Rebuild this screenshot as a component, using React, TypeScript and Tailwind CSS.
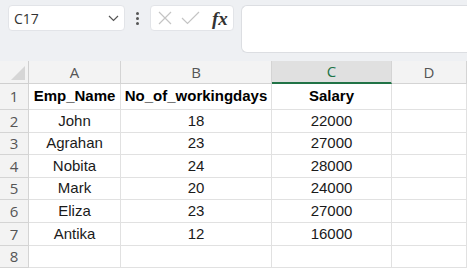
import React from 'react';

const rows = [
  ['Emp_Name', 'No_of_workingdays', 'Salary'],
  ['John', '18', '22000'],
  ['Agrahan', '23', '27000'],
  ['Nobita', '24', '28000'],
  ['Mark', '20', '24000'],
  ['Eliza', '23', '27000'],
  ['Antika', '12', '16000'],
  ['', '', ''],
];

const cols = ['A', 'B', 'C', 'D'];

export default function App() {
  return (
    <div className="w-[467px] h-[270px] overflow-hidden bg-white" style={{ fontFamily: '"Liberation Sans", Arial, sans-serif' }}>
      {/* Formula bar area */}
      <div className="h-[61px] bg-[#eef0f3] flex items-start pt-[5px] pl-[8px]">
        <div className="w-[117px] h-[26px] bg-white rounded-[4px] border border-[#e2e4e8] flex items-center justify-between pl-[5px] pr-[5px]">
          <span className="text-[14px] text-[#333]" style={{ fontFamily: '"Open Sans", sans-serif' }}>C17</span>
          <svg width="11" height="7" viewBox="0 0 11 7" fill="none">
            <path d="M1 1l4.5 4.5L10 1" stroke="#555" strokeWidth="1.2" />
          </svg>
        </div>
        <div className="w-[25px] h-[26px] flex flex-col items-center justify-center gap-[2px]">
          <span className="w-[3px] h-[3px] bg-[#555] rounded-full"></span>
          <span className="w-[3px] h-[3px] bg-[#555] rounded-full"></span>
          <span className="w-[3px] h-[3px] bg-[#555] rounded-full"></span>
        </div>
        <div className="w-[84px] h-[26px] bg-white rounded-[4px] border border-[#e2e4e8] flex items-center pl-[6px] gap-[8px]">
          <svg width="16" height="16" viewBox="0 0 16 16" fill="none">
            <path d="M2 2l12 12M14 2L2 14" stroke="#c4c4c4" strokeWidth="1.2" />
          </svg>
          <svg width="19" height="16" viewBox="0 0 19 16" fill="none">
            <path d="M1 8l5.5 5.5L18 2" stroke="#c4c4c4" strokeWidth="1.2" />
          </svg>
          <span className="text-[19px] italic font-semibold text-[#333] leading-none ml-[4px]" style={{ fontFamily: '"Liberation Serif", serif' }}>
            fx
          </span>
        </div>
        <div className="ml-[7px] flex-1 h-[48px] bg-white rounded-l-[6px] border border-r-0 border-[#dcdee2]"></div>
      </div>

      {/* Grid */}
      <div className="grid grid-cols-[29px_92px_151px_120px_1fr]">
        {/* header row */}
        <div className="h-[23px] bg-[#f3f3f3] border-r border-b border-[#cfcfcf] relative">
          <svg className="absolute right-[3px] bottom-[3px]" width="14" height="14" viewBox="0 0 14 14">
            <path d="M14 0L14 14L0 14Z" fill="#d6d6d6" />
          </svg>
        </div>
        {cols.map((c) => (
          <div
            key={c}
            className={
              c === 'C'
                ? 'h-[23px] bg-[#e0e0e0] border-r border-[#d4d4d4] border-b-2 border-b-[#217346] flex items-center justify-center text-[15px] text-[#217346]'
                : 'h-[23px] bg-[#f3f3f3] border-r border-b border-[#d4d4d4] flex items-center justify-center text-[15px] text-[#555]'
            }
            style={{ fontFamily: '"Open Sans", sans-serif' }}
          >
            {c}
          </div>
        ))}

        {rows.map((r, i) => (
          <React.Fragment key={i}>
            <div
              className={
                (i === 0 ? 'h-[26px] ' : 'h-[22.6px] ') +
                'bg-[#f3f3f3] border-r border-b border-[#d4d4d4] flex items-center justify-center text-[15px] text-[#555]'
              }
              style={{ fontFamily: '"Open Sans", sans-serif' }}
            >
              {i + 1}
            </div>
            {[...r, ''].map((v, j) => (
              <div
                key={j}
                className={
                  (i === 0 ? 'h-[26px] font-bold text-black ' : 'h-[22.6px] text-[#1a1a1a] ') +
                  'border-r border-b border-[#e1e1e1] flex items-center justify-center text-[15px] whitespace-nowrap'
                }
              >
                {v}
              </div>
            ))}
          </React.Fragment>
        ))}
      </div>
    </div>
  );
}
